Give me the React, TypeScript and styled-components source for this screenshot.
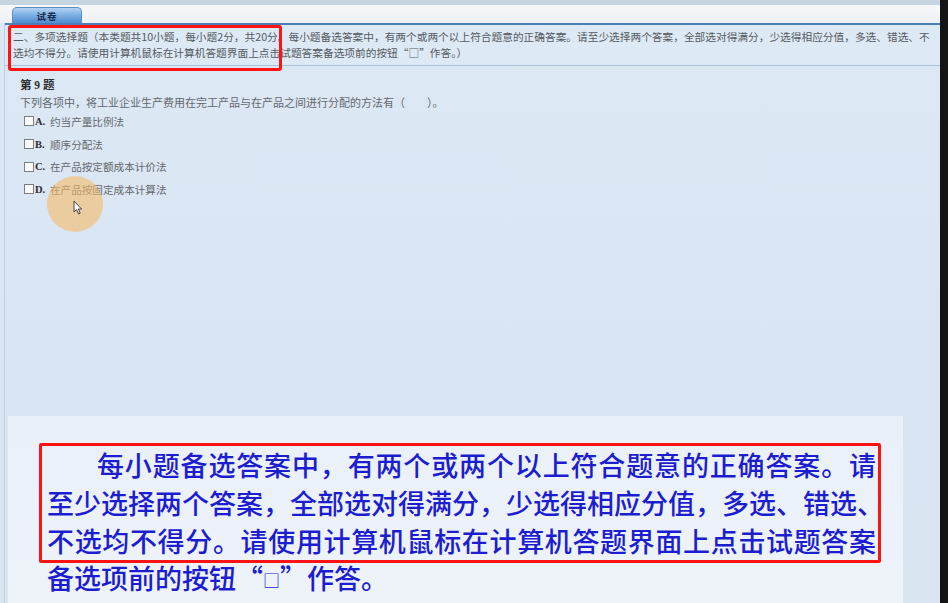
import React from "react";
import styled, { createGlobalStyle } from "styled-components";

const Global = createGlobalStyle`
  html, body { margin: 0; padding: 0; }
  body {
    width: 948px;
    height: 603px;
    overflow: hidden;
    background: #dae5f1;
    font-family: "Noto Sans CJK SC", "Noto Sans", sans-serif;
  }
`;

const Frame = styled.div`
  position: relative;
  display: flex;
  width: 948px;
  height: 603px;
  overflow: hidden;
`;

const Main = styled.div`
  flex: 1;
  display: flex;
  flex-direction: column;
  background: linear-gradient(180deg, #dce8f4 0%, #d9e5f2 60%, #dae5f2 100%);
  position: relative;
`;

const BlackBar = styled.div`
  width: 12px;
  background: #141414;
`;

const TopStrip = styled.div`
  height: 5px;
  background: #c7d4e2;
`;

const TabBar = styled.div`
  height: 18px;
  display: flex;
  align-items: flex-end;
  padding-left: 12px;
  background: linear-gradient(180deg, #f6f7f9 0%, #eef1f5 100%);
`;

const Tab = styled.div`
  width: 70px;
  height: 16px;
  box-sizing: border-box;
  border: 1px solid #5d8fc6;
  border-bottom: none;
  border-radius: 5px 5px 0 0;
  background: linear-gradient(180deg, #b4d3f3 0%, #7aaee3 50%, #4f8bd0 100%);
  display: flex;
  align-items: center;
  justify-content: center;
  font-size: 9.5px;
  font-weight: 700;
  color: #1c2a4c;
  letter-spacing: 1px;
`;

const Body = styled.div`
  flex: 1;
  display: flex;
  flex-direction: column;
  margin-left: 4px;
  border-left: 1px solid #bcd0e6;
`;

const Header = styled.div`
  height: 36px;
  border-top: 2px solid #4a7fb8;
  border-bottom: 1px solid #a8c2de;
  background: #dde9f5;
  padding: 4px 10px 0 8px;
  font-size: 10.7px;
  line-height: 16px;
  color: #555a60;
`;

const HeadLine = styled.div<{ $justify?: boolean }>`
  white-space: nowrap;
  text-align: justify;
  text-align-last: ${(p) => (p.$justify ? "justify" : "auto")};
`;

const Question = styled.div`
  padding: 11px 0 0 15px;
  color: #5a5e64;
`;

const QTitle = styled.div`
  font-family: "Liberation Serif", "Noto Sans CJK SC", serif;
  font-weight: 700;
  font-size: 11.5px;
  line-height: 16px;
  color: #2c2c2c;
`;

const QText = styled.div`
  margin-top: 1px;
  font-size: 11px;
  line-height: 16px;
  color: #63676d;
  white-space: nowrap;
`;

const Options = styled.div`
  display: flex;
  flex-direction: column;
`;

const Option = styled.div`
  height: 22.7px;
  display: flex;
  align-items: center;
  padding-left: 4px;
  font-size: 10.6px;
  color: #63676d;
`;

const Box = styled.span`
  width: 8px;
  height: 8px;
  border: 1px solid #7a7e82;
  background: #fbfbfb;
  margin-right: 1px;
`;

const Letter = styled.span`
  font-family: "Liberation Serif", serif;
  font-weight: 700;
  font-size: 10.5px;
  color: #2e2e2e;
  width: 15px;
`;

const Spacer = styled.div`
  flex: 1;
`;

const Panel = styled.div`
  height: 187px;
  width: 895px;
  margin-left: 3px;
  background: linear-gradient(180deg, #eaf0f8 0%, #eef3fa 100%);
  padding: 27px 0 0 31px;
  box-sizing: border-box;
  color: #1d1dd0;
  font-size: 27px;
  font-weight: 500;
  line-height: 38px;
`;

const RedFrame = styled.div`
  width: 842px;
  box-sizing: border-box;
  border: 3px solid #ff1212;
  border-radius: 2px;
  padding: 0 2px 0 5px;
`;

const BigLine = styled.div<{ $indent?: number; $justify?: boolean }>`
  white-space: nowrap;
  padding-left: ${(p) => p.$indent ?? 0}px;
  text-align: justify;
  text-align-last: ${(p) => (p.$justify ? "justify" : "auto")};
`;

const TailLine = styled(BigLine)`
  margin-left: 8px;
  margin-top: -4px;
`;

const SmallBox = styled.span`
  font-size: 17px;
  font-weight: 400;
  vertical-align: 2px;
`;

const TopMark = styled.div`
  position: absolute;
  left: 8px;
  top: 25px;
  width: 274px;
  height: 46px;
  box-sizing: border-box;
  border: 3px solid #ff1414;
  border-radius: 3px;
`;

const Highlight = styled.div`
  position: absolute;
  left: 47px;
  top: 176px;
  width: 56px;
  height: 56px;
  border-radius: 50%;
  background: rgba(245, 186, 104, 0.6);
`;

const Cursor = styled.svg`
  position: absolute;
  left: 73px;
  top: 200px;
`;

export default function App() {
  return (
    <>
      <Global />
      <Frame>
        <Main>
          <TopStrip />
          <TabBar>
            <Tab>试卷</Tab>
          </TabBar>
          <Body>
            <Header>
              <HeadLine $justify>
                二、多项选择题（本类题共10小题，每小题2分，共20分。每小题备选答案中，有两个或两个以上符合题意的正确答案。请至少选择两个答案，全部选对得满分，少选得相应分值，多选、错选、不
              </HeadLine>
              <HeadLine>选均不得分。请使用计算机鼠标在计算机答题界面上点击试题答案备选项前的按钮“□”作答。）</HeadLine>
            </Header>
            <Question>
              <QTitle>第 9 题</QTitle>
              <QText>下列各项中，将工业企业生产费用在完工产品与在产品之间进行分配的方法有（　　）。</QText>
              <Options>
                <Option>
                  <Box />
                  <Letter>A.</Letter>约当产量比例法
                </Option>
                <Option>
                  <Box />
                  <Letter>B.</Letter>顺序分配法
                </Option>
                <Option>
                  <Box />
                  <Letter>C.</Letter>在产品按定额成本计价法
                </Option>
                <Option>
                  <Box />
                  <Letter>D.</Letter>在产品按固定成本计算法
                </Option>
              </Options>
            </Question>
            <Spacer />
            <Panel>
              <RedFrame>
                <BigLine $indent={50} $justify>
                  每小题备选答案中，有两个或两个以上符合题意的正确答案。请
                </BigLine>
                <BigLine $justify>至少选择两个答案，全部选对得满分，少选得相应分值，多选、错选、</BigLine>
                <BigLine $justify>不选均不得分。请使用计算机鼠标在计算机答题界面上点击试题答案</BigLine>
              </RedFrame>
              <TailLine>
                备选项前的按钮“<SmallBox>□</SmallBox>”作答。
              </TailLine>
            </Panel>
          </Body>
          <TopMark />
          <Highlight />
          <Cursor width="10" height="16" viewBox="0 0 10 16">
            <path d="M1 1 L1 12 L3.6 9.6 L5.6 14 L7.2 13.2 L5.3 9 L8.6 9 Z" fill="#fff" stroke="#333" strokeWidth="0.9" strokeLinejoin="round" />
          </Cursor>
        </Main>
        <BlackBar />
      </Frame>
    </>
  );
}
